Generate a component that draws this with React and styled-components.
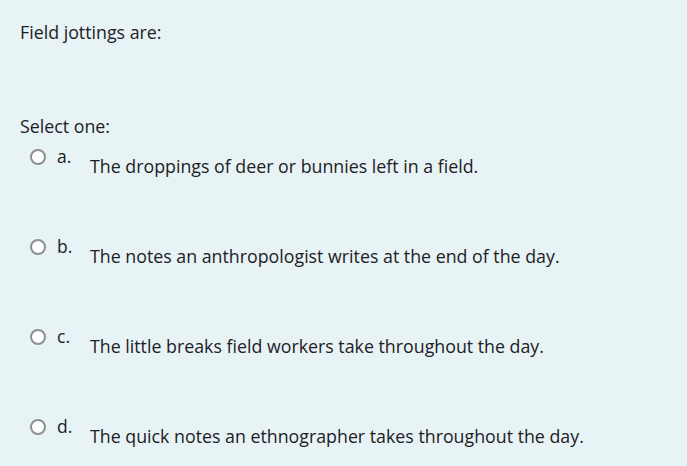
import React from "react";
import styled, { createGlobalStyle } from "styled-components";

const Global = createGlobalStyle`
  html, body { margin: 0; padding: 0; background: #e7f3f5; }
  body { font-family: "Open Sans", "Noto Sans", sans-serif; color: #1d2125; }
`;

const Page = styled.div`
  width: 687px;
  height: 466px;
  overflow: hidden;
  background: #e7f3f5;
  box-sizing: border-box;
  padding: 20px 0 0 20px;
`;

const Question = styled.div`
  font-size: 17.8px;
  line-height: 24px;
`;

const Prompt = styled.div`
  font-size: 17.8px;
  line-height: 24px;
  margin-top: 70px;
`;

const Options = styled.div`
  display: flex;
  flex-direction: column;
  margin-top: 6px;
`;

const Option = styled.label`
  display: flex;
  align-items: flex-start;
  height: 90px;
  padding-left: 10px;
  &:last-child { height: 60px; }
`;

const Radio = styled.span`
  width: 16px;
  height: 16px;
  box-sizing: border-box;
  border: 2px solid #8d8f93;
  border-radius: 50%;
  background: #fff;
  margin-top: 5px;
  flex: none;
`;

const Letter = styled.span`
  font-size: 17.5px;
  line-height: 24px;
  margin-left: 11px;
  width: 33px;
  flex: none;
`;

const Text = styled.span`
  font-size: 17.8px;
  line-height: 24px;
  margin-top: 10px;
  white-space: nowrap;
`;

const items = [
  ["a.", "The droppings of deer or bunnies left in a field."],
  ["b.", "The notes an anthropologist writes at the end of the day."],
  ["c.", "The little breaks field workers take throughout the day."],
  ["d.", "The quick notes an ethnographer takes throughout the day."],
];

export default function App() {
  return (
    <Page>
      <Global />
      <Question>Field jottings are:</Question>
      <Prompt>Select one:</Prompt>
      <Options>
        {items.map(([l, t]) => (
          <Option key={l}>
            <Radio />
            <Letter>{l}</Letter>
            <Text>{t}</Text>
          </Option>
        ))}
      </Options>
    </Page>
  );
}
